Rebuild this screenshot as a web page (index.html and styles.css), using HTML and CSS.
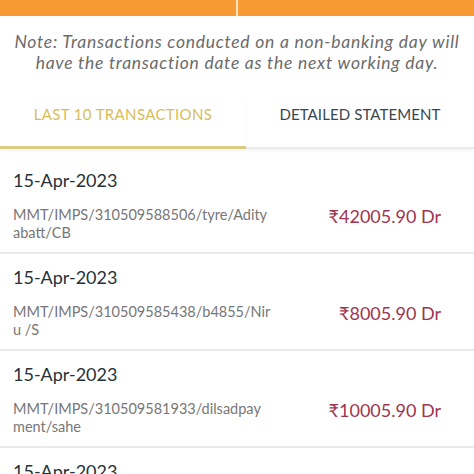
FILE: index.html
```html
<!DOCTYPE html>
<html>
<head>
<meta charset="utf-8">
<link rel="stylesheet" href="styles.css">
</head>
<body>
<div class="topbar"><div class="half first"></div><div class="half"></div></div>
<p class="note">Note: Transactions conducted on a non-banking day will<br>have the transaction date as the next working day.</p>
<div class="tabs">
  <div class="tab active">LAST 10 TRANSACTIONS</div>
  <div class="tab">DETAILED STATEMENT</div>
</div>
<div class="list">
  <div class="row">
    <div class="date">15-Apr-2023</div>
    <div class="line">
      <div class="desc">MMT/IMPS/310509588506/tyre/Adity<br>abatt/CB</div>
      <div class="amt">₹42005.90 Dr</div>
    </div>
  </div>
  <div class="row">
    <div class="date">15-Apr-2023</div>
    <div class="line">
      <div class="desc">MMT/IMPS/310509585438/b4855/Nir<br>u /S</div>
      <div class="amt">₹8005.90 Dr</div>
    </div>
  </div>
  <div class="row">
    <div class="date">15-Apr-2023</div>
    <div class="line">
      <div class="desc">MMT/IMPS/310509581933/dilsadpay<br>ment/sahe</div>
      <div class="amt">₹10005.90 Dr</div>
    </div>
  </div>
  <div class="row">
    <div class="date">15-Apr-2023</div>
  </div>
</div>
</body>
</html>
```
FILE: styles.css
```css
html, body { margin: 0; padding: 0; background: #fff; overflow: hidden; height: 474px; }
body { font-family: Lato, "Noto Sans", "DejaVu Sans", sans-serif; }
.topbar { display: flex; height: 16px; }
.half { flex: 1; background: #f89a33; }
.half.first { border-right: 2px solid #fbe2c0; }
.note {
  margin: 0; padding: 15px 0 0;
  text-align: center; font-style: italic; font-size: 17.5px; line-height: 21px;
  letter-spacing: 0.75px; color: #6b6b6b; white-space: nowrap;
}
.tabs { display: flex; margin-top: 28px; }
.tab {
  height: 43px; padding-top: 3px; display: flex; align-items: flex-start; justify-content: center;
  font-size: 15px; line-height: 20px; color: #37474f; letter-spacing: 0.1px;
  border-bottom: 2px solid #ebebeb; box-shadow: 0 2px 3px rgba(0,0,0,0.05);
}
.tab:first-child { width: 246px; }
.tab:last-child { flex: 1; }
.tab.active { color: #d7bd5a; border-bottom: 3px solid #dccb82; height: 42px; letter-spacing: 0.35px; }
.list { padding-top: 8px; }
.row { padding: 11px 33px 10px 13px; border-bottom: 2px solid #e9e9e9; }
.date { font-size: 18px; line-height: 24px; color: #263238; }
.line { display: flex; justify-content: space-between; align-items: flex-start; margin-top: 14px; }
.desc { font-size: 14.5px; line-height: 18px; color: #777; }
.amt { font-size: 18px; line-height: 20px; color: #a03550; }
```
